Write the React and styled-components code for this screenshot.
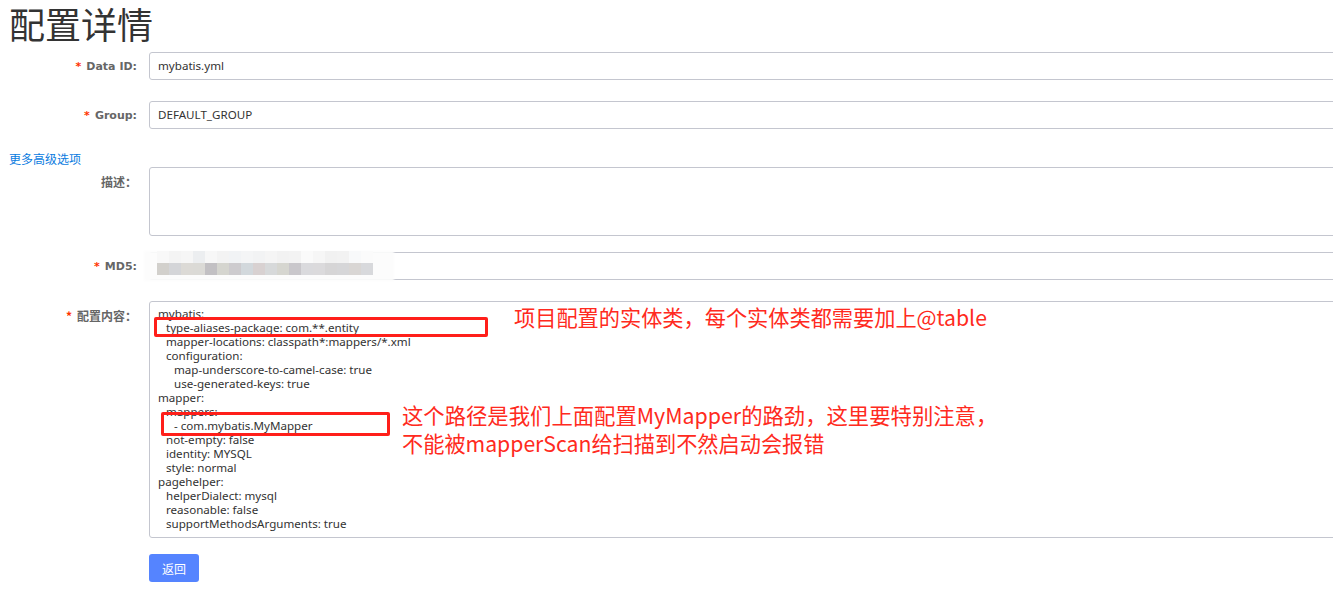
import React from "react";
import styled, { createGlobalStyle } from "styled-components";

const CJK = `"Noto Sans CJK SC", sans-serif`;

const GlobalStyle = createGlobalStyle`
  html, body {
    margin: 0;
    padding: 0;
    background: #fff;
    overflow: hidden;
  }
  body {
    font-family: "Noto Sans", ${CJK};
    font-size: 12px;
    color: #333;
  }
`;

const Page = styled.div`
  position: relative;
  width: 1333px;
  height: 592px;
  overflow: hidden;
  padding-left: 9px;
  box-sizing: border-box;
`;

const Title = styled.h1`
  margin: 0;
  height: 49px;
  padding-top: 3px;
  font-family: "Liberation Sans", ${CJK};
  font-size: 36px;
  line-height: 48px;
  font-weight: 400;
  color: #333;
`;

const Row = styled.div`
  display: flex;
  align-items: flex-start;
  margin-bottom: ${(p) => p.$gap || 21}px;
`;

const Label = styled.label`
  width: 128px;
  flex: none;
  text-align: right;
  padding-top: 8px;
  font-family: "DejaVu Sans", ${CJK};
  font-size: 11px;
  line-height: 14px;
  font-weight: 700;
  color: #666;
  box-sizing: border-box;
`;

const CjkLabel = styled(Label)`
  font-family: ${CJK};
  font-size: 12px;
`;

const Star = styled.span`
  color: #ff3300;
  margin-right: 5px;
`;

const Field = styled.div`
  margin-left: 12px;
  width: 1200px;
  flex: none;
  height: ${(p) => p.$height || 28}px;
  box-sizing: border-box;
  border: 1px solid #c4c6cf;
  border-radius: 3px;
  padding: 0 8px;
  line-height: 26px;
  font-size: 11.6px;
  color: #333;
`;

const CodeField = styled(Field)`
  padding: 5px 8px;
  line-height: 14px;
  overflow: hidden;
`;

const CodeLine = styled.div`
  height: 14px;
  padding-left: ${(p) => (p.$level || 0) * 8}px;
  white-space: pre;
`;

const MoreLink = styled.a`
  display: block;
  height: 16px;
  line-height: 16px;
  font-family: ${CJK};
  font-size: 12px;
  color: #0a7be0;
  text-decoration: none;
`;

const BackButton = styled.button`
  margin-left: 140px;
  display: block;
  width: 50px;
  height: 28px;
  border: 0;
  border-radius: 3px;
  background: #5584ff;
  color: #fff;
  font-family: ${CJK};
  font-size: 12px;
  padding: 0;
`;

/* blurred-out md5 value */
const BlurPatch = styled.div`
  position: absolute;
  left: 144px;
  top: 251px;
  width: 250px;
  height: 30px;
  background: #fcfcfc;
  filter: blur(1px);
`;

const BlurCells = styled.div`
  position: absolute;
  left: ${(p) => p.$left}px;
  top: ${(p) => p.$top}px;
  display: flex;
`;

const BlurCell = styled.i`
  display: block;
  width: 12px;
  height: 12px;
  background: ${(p) => p.$color};
`;

const Marker = styled.div`
  position: absolute;
  left: ${(p) => p.$left}px;
  top: ${(p) => p.$top}px;
  width: ${(p) => p.$width}px;
  height: ${(p) => p.$height}px;
  box-sizing: border-box;
  border: 3px solid #ff1f1a;
  border-radius: 2px;
`;

const Note = styled.div`
  position: absolute;
  left: ${(p) => p.$left}px;
  top: ${(p) => p.$top}px;
  font-family: "Noto Sans CJK SC", "Noto Sans", sans-serif;
  font-size: ${(p) => p.$size || 21.2}px;
  line-height: 29px;
  color: #ff2a20;
  white-space: pre;
`;

const blurColors = ["#d2d0cc", "#d4d5d8", "#dcdad6", "#dbdad6", "#c2c0c3", "#d5d5cf", "#cdcbce", "#d2d8dc", "#d8d1d1", "#d7d9da", "#d6d6d0", "#c9c7cb", "#dadadd", "#dbdadc", "#d6d5d6", "#d6d6d8", "#d9d6d4", "#d8d9dc"];
const faintColors = ["#f8f8f8", "#f4f4f4", "#f6f6f6", "#eceef0", "#f7f7f7", "#f3f3f3", "#f1f3f5", "#f4f5f6", "#f2f3f4", "#f5f5f5", "#f2f2f2", "#f3f3f3", "#fafafa", "#f6f6f6", "#f1f1f1", "#f2f2f2", "#f8f9fa", "#fbfbfb"];

const code = [
  ["mybatis:", 0],
  ["type-aliases-package: com.**.entity", 1],
  ["mapper-locations: classpath*:mappers/*.xml", 1],
  ["configuration:", 1],
  ["map-underscore-to-camel-case: true", 2],
  ["use-generated-keys: true", 2],
  ["mapper:", 0],
  ["mappers:", 1],
  ["- com.mybatis.MyMapper", 2],
  ["not-empty: false", 1],
  ["identity: MYSQL", 1],
  ["style: normal", 1],
  ["pagehelper:", 0],
  ["helperDialect: mysql", 1],
  ["reasonable: false", 1],
  ["supportMethodsArguments: true", 1],
];

const App = () => {
  return (
    <Page>
      <GlobalStyle />
      <Title>配置详情</Title>
      <Row>
        <Label><Star>*</Star>Data ID:</Label>
        <Field>mybatis.yml</Field>
      </Row>
      <Row $gap={22}>
        <Label><Star>*</Star>Group:</Label>
        <Field>DEFAULT_GROUP</Field>
      </Row>
      <MoreLink>更多高级选项</MoreLink>
      <Row $gap={16}>
        <CjkLabel>描述：</CjkLabel>
        <Field $height={69} />
      </Row>
      <Row>
        <Label><Star>*</Star>MD5:</Label>
        <Field />
      </Row>
      <Row $gap={16}>
        <CjkLabel><Star>*</Star>配置内容：</CjkLabel>
        <CodeField $height={237}>
          {code.map(([text, level]) => (
            <CodeLine key={text} $level={level}>{text}</CodeLine>
          ))}
        </CodeField>
      </Row>
      <BackButton>返回</BackButton>

      <BlurPatch />
      <BlurCells $left={157} $top={251}>
        {faintColors.map((color, i) => (
          <BlurCell key={i} $color={color} />
        ))}
      </BlurCells>
      <BlurCells $left={157} $top={263}>
        {blurColors.map((color, i) => (
          <BlurCell key={i} $color={color} />
        ))}
      </BlurCells>

      <Marker $left={154} $top={317} $width={334} $height={20} />
      <Marker $left={161} $top={412} $width={229} $height={24} />
      <Note $left={514} $top={302}>项目配置的实体类，每个实体类都需要加上@table</Note>
      <Note $left={402} $top={400} $size={21.35}>这个路径是我们上面配置MyMapper的路劲，这里要特别注意，</Note>
      <Note $left={402} $top={428}>不能被mapperScan给扫描到不然启动会报错</Note>
    </Page>
  );
};

export default App;
